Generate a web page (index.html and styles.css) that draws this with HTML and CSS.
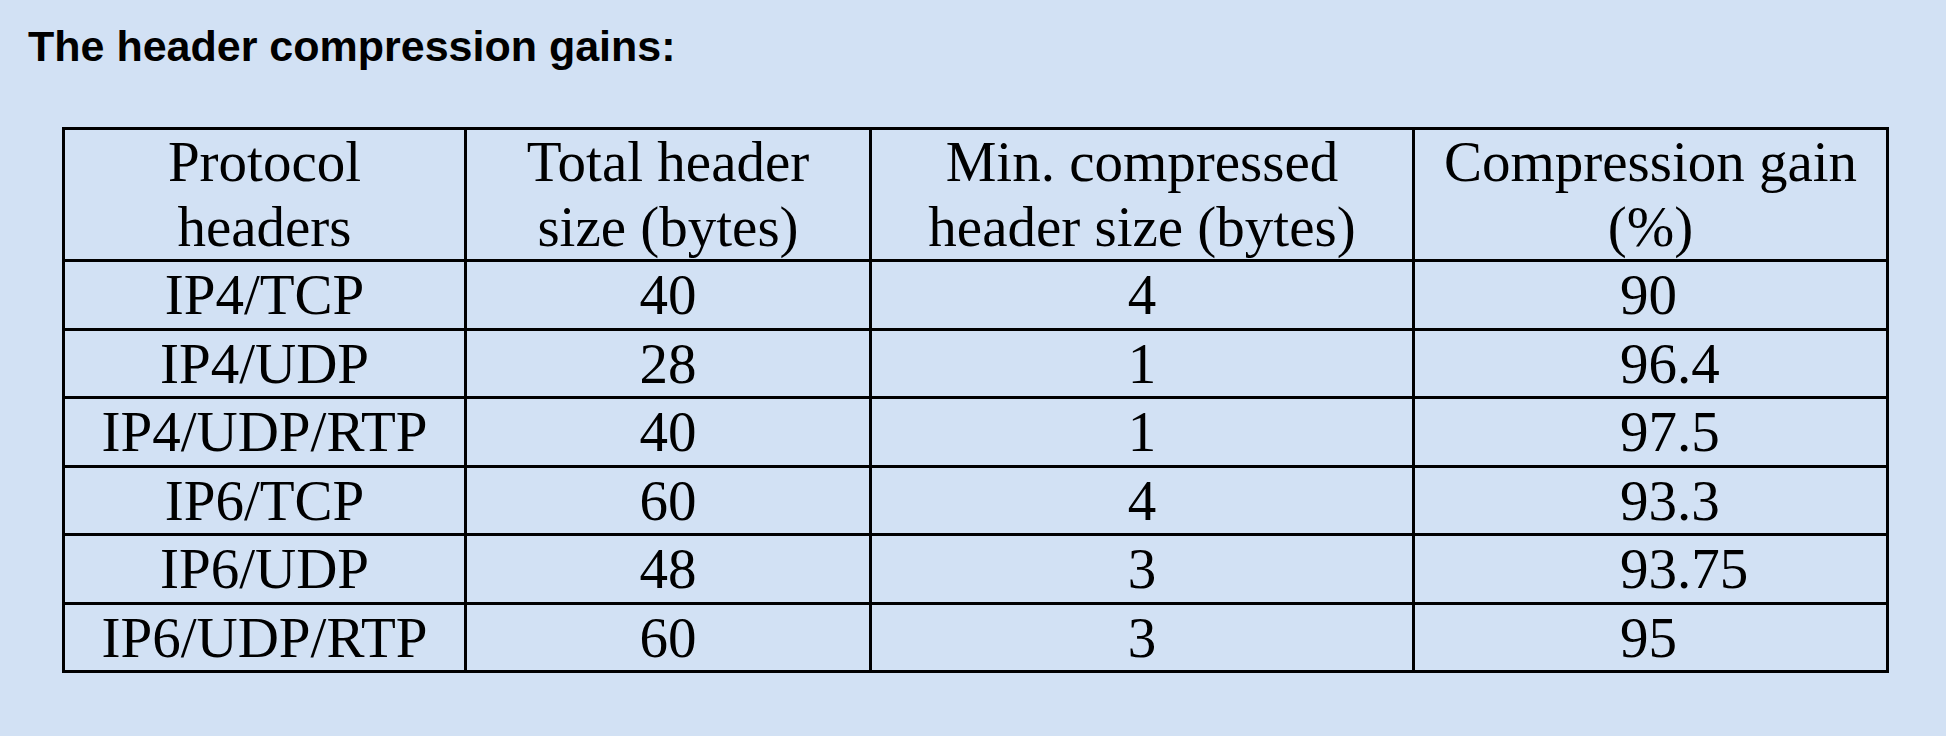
FILE: index.html
```html
<!DOCTYPE html>
<html lang="en">
<head>
<meta charset="utf-8">
<title>Header compression gains</title>
<link rel="stylesheet" href="styles.css">
</head>
<body>
<h1 class="title">The header compression gains:</h1>
<table class="gains">
  <colgroup>
    <col class="c1"><col class="c2"><col class="c3"><col class="c4">
  </colgroup>
  <thead>
    <tr>
      <th>Protocol<br>headers</th>
      <th>Total header<br>size (bytes)</th>
      <th>Min. compressed<br>header size (bytes)</th>
      <th>Compression gain<br>(%)</th>
    </tr>
  </thead>
  <tbody>
    <tr><td>IP4/TCP</td><td>40</td><td>4</td><td class="gain">90</td></tr>
    <tr><td>IP4/UDP</td><td>28</td><td>1</td><td class="gain">96.4</td></tr>
    <tr><td>IP4/UDP/RTP</td><td>40</td><td>1</td><td class="gain">97.5</td></tr>
    <tr><td>IP6/TCP</td><td>60</td><td>4</td><td class="gain">93.3</td></tr>
    <tr><td>IP6/UDP</td><td>48</td><td>3</td><td class="gain">93.75</td></tr>
    <tr><td>IP6/UDP/RTP</td><td>60</td><td>3</td><td class="gain">95</td></tr>
  </tbody>
</table>
</body>
</html>
```

FILE: styles.css
```css
html, body {
  margin: 0;
  padding: 0;
  background: #d2e1f4;
}
body {
  width: 1946px;
  height: 736px;
  overflow: hidden;
}
.title {
  margin: 0;
  padding: 21px 0 0 28px;
  font-family: "Liberation Sans", Arial, sans-serif;
  font-weight: bold;
  font-size: 43px;
  line-height: 50px;
  color: #000;
}
.gains {
  margin: 56px 0 0 62px;
  border-collapse: separate;
  border-spacing: 0;
  table-layout: fixed;
  width: 1827px;
  border-top: 3px solid #000;
  border-left: 3px solid #000;
  font-family: "Liberation Serif", "Times New Roman", serif;
  font-size: 57px;
  color: #000;
}
.c1 { width: 402px; }
.c2 { width: 405px; }
.c3 { width: 543px; }
.c4 { width: 474px; }
.gains th,
.gains td {
  padding: 0;
  border-right: 3px solid #000;
  border-bottom: 3px solid #000;
  text-align: center;
  font-weight: normal;
  white-space: nowrap;
}
.gains th {
  line-height: 64.5px;
}
.gains td {
  line-height: 65.5px;
}
.gains td.gain {
  text-align: left;
  padding-left: 205px;
}
```
